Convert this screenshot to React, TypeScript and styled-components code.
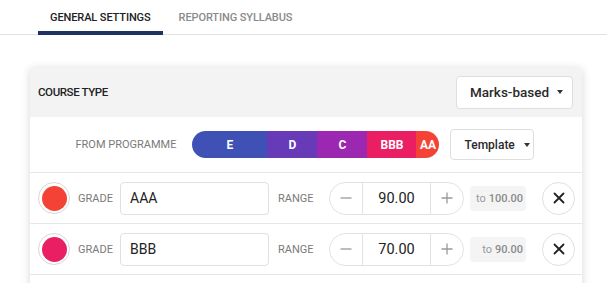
import React from "react";
import styled, { createGlobalStyle } from "styled-components";

const Global = createGlobalStyle`
  html, body { margin: 0; padding: 0; background: #fff; }
  body { font-family: Roboto, "Noto Sans", Arial, sans-serif; overflow: hidden; }
  * { box-sizing: border-box; }
`;

const Page = styled.div`
  width: 607px;
  height: 283px;
  overflow: hidden;
`;

const Tabs = styled.div`
  display: flex;
  height: 35px;
  padding-left: 38px;
  border-bottom: 1px solid #e2e2e2;
`;

const Tab = styled.div<{ $active?: boolean }>`
  position: relative;
  display: flex;
  align-items: center;
  padding: 0 ${(p) => (p.$active ? "12px" : "16px")};
  font-size: 11px;
  font-weight: 500;
  letter-spacing: -0.1px;
  color: ${(p) => (p.$active ? "#222" : "#8a8a8a")};
  ${(p) =>
    p.$active &&
    `&::after { content: ""; position: absolute; left: 0; right: 0; bottom: -1px; height: 4px; background: #1f3262; }`}
`;

const Card = styled.div`
  margin: 32px 0 0 30px;
  width: 552px;
  background: #fff;
  box-shadow: 0 2px 10px rgba(0, 0, 0, 0.16);
  border-radius: 3px 3px 0 0;
`;

const Header = styled.div`
  height: 50px;
  background: #f3f3f3;
  display: flex;
  align-items: center;
  justify-content: space-between;
  padding: 0 9px 0 8px;
  border-radius: 3px 3px 0 0;
`;

const HeaderTitle = styled.div`
  font-size: 11.5px;
  font-weight: 500;
  letter-spacing: -0.4px;
  color: #222;
`;

const Select = styled.div<{ $w: number; $h: number; $fs: number; $gap: number }>`
  width: ${(p) => p.$w}px;
  height: ${(p) => p.$h}px;
  border: 1px solid #dedede;
  border-radius: 4px;
  background: #fff;
  display: flex;
  align-items: center;
  gap: ${(p) => p.$gap}px;
  padding: 0 0 0 13px;
  font-size: ${(p) => p.$fs}px;
  font-weight: 500;
  color: #2a2a2a;
  white-space: nowrap;
`;

const Caret = styled.span`
  width: 0;
  height: 0;
  border-left: 3.5px solid transparent;
  border-right: 3.5px solid transparent;
  border-top: 4px solid #333;
`;

const ProgRow = styled.div`
  height: 56px;
  display: flex;
  align-items: center;
  justify-content: center;
  border-bottom: 1px solid #e6e6e6;
  padding-right: 2px;
`;

const Label = styled.div<{ $w?: number; $ml?: number; $mr: number }>`
  ${(p) => (p.$w ? `width: ${p.$w}px;` : "")}
  font-size: 11px;
  color: #7a7a7a;
  margin-left: ${(p) => p.$ml ?? 0}px;
  margin-right: ${(p) => p.$mr}px;
  white-space: nowrap;
`;

const Bar = styled.div`
  display: flex;
  height: 27px;
  border-radius: 14px;
  overflow: hidden;
  margin-right: 11px;
`;

const Seg = styled.div<{ $w: number; $c: string }>`
  width: ${(p) => p.$w}px;
  background: ${(p) => p.$c};
  color: #fff;
  font-size: 12px;
  font-weight: 700;
  display: flex;
  align-items: center;
  justify-content: center;
`;

const GradeRow = styled.div`
  height: 51px;
  display: flex;
  align-items: center;
  padding-left: 8px;
  border-bottom: 1px solid #e6e6e6;
`;

const Swatch = styled.div<{ $c: string }>`
  width: 32px;
  height: 32px;
  border-radius: 50%;
  border: 1px solid #d8d8d8;
  display: flex;
  align-items: center;
  justify-content: center;
  margin-right: 8px;
  &::after {
    content: "";
    width: 25px;
    height: 25px;
    border-radius: 50%;
    background: ${(p) => p.$c};
  }
`;

const TextInput = styled.div`
  width: 149px;
  height: 33px;
  border: 1px solid #e0e0e0;
  border-radius: 4px;
  display: flex;
  align-items: center;
  padding-left: 9px;
  font-size: 14px;
  color: #222;
`;

const Stepper = styled.div`
  width: 135px;
  height: 33px;
  border: 1px solid #e2e2e2;
  border-radius: 17px;
  display: flex;
  align-items: stretch;
  margin-right: 6px;
`;

const StepBtn = styled.div<{ $side: "l" | "r" }>`
  width: 33px;
  display: flex;
  align-items: center;
  justify-content: center;
  ${(p) => (p.$side === "l" ? "border-right" : "border-left")}: 1px solid #e2e2e2;
`;

const StepValue = styled.div`
  flex: 1;
  display: flex;
  align-items: center;
  justify-content: center;
  font-size: 14.5px;
  color: #222;
`;

const ToBox = styled.div`
  width: 56px;
  height: 25px;
  background: #f4f4f4;
  border-radius: 4px;
  display: flex;
  align-items: center;
  justify-content: flex-end;
  padding-right: 3px;
  font-size: 11px;
  color: #9a9a9a;
  margin-right: 16px;
  gap: 3px;
  & b {
    font-weight: 500;
    color: #8a8a8a;
  }
`;

const CloseBtn = styled.div`
  width: 33px;
  height: 33px;
  border-radius: 50%;
  border: 1px solid #e0e0e0;
  display: flex;
  align-items: center;
  justify-content: center;
`;

const Minus = () => (
  <svg width="12" height="12" viewBox="0 0 12 12">
    <path d="M0.5 6h11" stroke="#9a9a9a" strokeWidth="1.3" />
  </svg>
);
const Plus = () => (
  <svg width="12" height="12" viewBox="0 0 12 12">
    <path d="M0.5 6h11M6 0.5v11" stroke="#9a9a9a" strokeWidth="1.3" />
  </svg>
);
const XIcon = () => (
  <svg width="12" height="12" viewBox="0 0 12 12">
    <path d="M1.5 1.5l9 9M10.5 1.5l-9 9" stroke="#222" strokeWidth="1.8" strokeLinecap="round" />
  </svg>
);

const grades = [
  { color: "#f44336", name: "AAA", value: "90.00", to: "100.00" },
  { color: "#e91e63", name: "BBB", value: "70.00", to: "90.00" },
];

const segs = [
  { l: "E", w: 75, c: "#3f51b5" },
  { l: "D", w: 50, c: "#673ab7" },
  { l: "C", w: 50, c: "#9c27b0" },
  { l: "BBB", w: 49, c: "#e91e63" },
  { l: "AA", w: 23, c: "#f44336" },
];

export default function App() {
  return (
    <Page>
      <Global />
      <Tabs>
        <Tab $active>GENERAL SETTINGS</Tab>
        <Tab>REPORTING SYLLABUS</Tab>
      </Tabs>
      <Card>
        <Header>
          <HeaderTitle>COURSE TYPE</HeaderTitle>
          <Select $w={117} $h={33} $fs={13.5} $gap={8}>
            Marks-based <Caret />
          </Select>
        </Header>
        <ProgRow>
          <Label $mr={16}>FROM PROGRAMME</Label>
          <Bar>
            {segs.map((s) => (
              <Seg key={s.l} $w={s.w} $c={s.c}>
                {s.l}
              </Seg>
            ))}
          </Bar>
          <Select $w={84} $h={31} $fs={12} $gap={9}>
            Template <Caret />
          </Select>
        </ProgRow>
        {grades.map((g) => (
          <GradeRow key={g.name}>
            <Swatch $c={g.color} />
            <Label $w={33} $mr={9}>GRADE</Label>
            <TextInput>{g.name}</TextInput>
            <Label $w={35} $ml={9} $mr={16}>RANGE</Label>
            <Stepper>
              <StepBtn $side="l">
                <Minus />
              </StepBtn>
              <StepValue>{g.value}</StepValue>
              <StepBtn $side="r">
                <Plus />
              </StepBtn>
            </Stepper>
            <ToBox>
              to <b>{g.to}</b>
            </ToBox>
            <CloseBtn>
              <XIcon />
            </CloseBtn>
          </GradeRow>
        ))}
        <GradeRow />
      </Card>
    </Page>
  );
}
